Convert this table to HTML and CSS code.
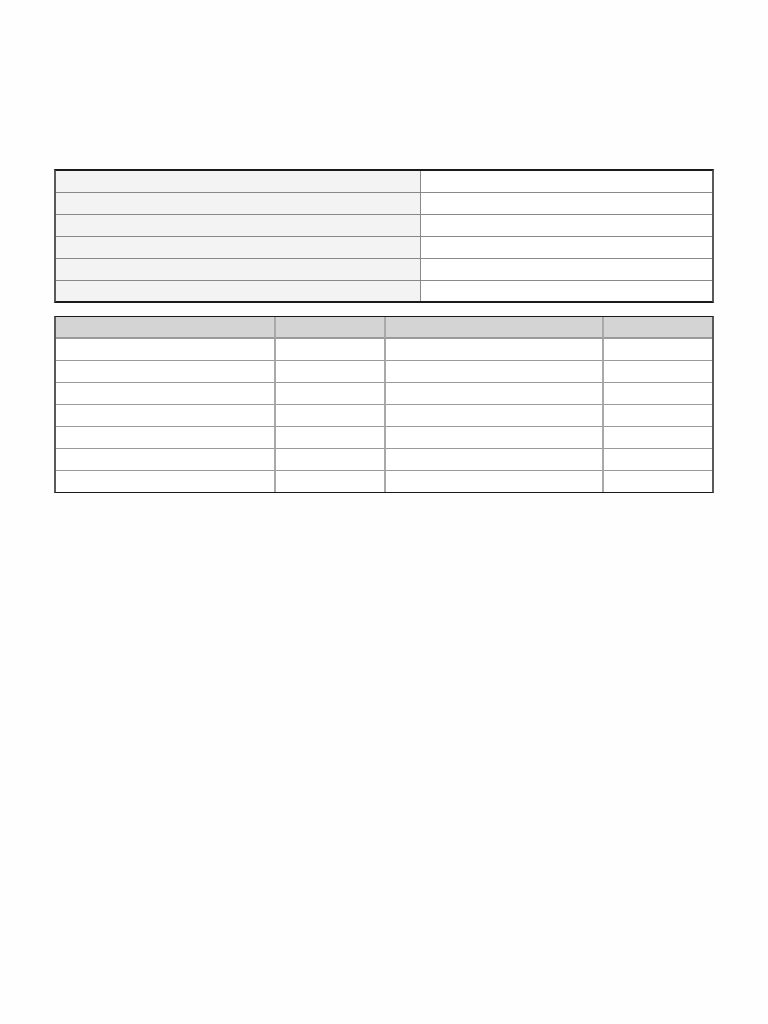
FILE: index.html
```html
<!DOCTYPE html>
<html lang="en">
<head>
<meta charset="utf-8">
<title>Tables</title>
<link rel="stylesheet" href="styles.css">
</head>
<body>
<main class="page">
  <table class="grid props">
    <colgroup><col class="c-key"><col class="c-val"></colgroup>
    <tbody>
      <tr><th></th><td></td></tr>
      <tr><th></th><td></td></tr>
      <tr><th></th><td></td></tr>
      <tr><th></th><td></td></tr>
      <tr><th></th><td></td></tr>
      <tr><th></th><td></td></tr>
    </tbody>
  </table>
  <table class="grid list">
    <colgroup><col class="c1"><col class="c2"><col class="c3"><col class="c4"></colgroup>
    <thead>
      <tr><th></th><th></th><th></th><th></th></tr>
    </thead>
    <tbody>
      <tr><td></td><td></td><td></td><td></td></tr>
      <tr><td></td><td></td><td></td><td></td></tr>
      <tr><td></td><td></td><td></td><td></td></tr>
      <tr><td></td><td></td><td></td><td></td></tr>
      <tr><td></td><td></td><td></td><td></td></tr>
      <tr><td></td><td></td><td></td><td></td></tr>
      <tr><td></td><td></td><td></td><td></td></tr>
    </tbody>
  </table>
</main>
</body>
</html>
```

FILE: styles.css
```css
html, body {
  margin: 0;
  padding: 0;
  background: #fefefe;
  font-family: "Liberation Sans", Arial, sans-serif;
  font-size: 13px;
}

.page {
  padding: 169px 54px 0;
  display: flex;
  flex-direction: column;
  gap: 13px;
}

.grid {
  width: 660px;
  table-layout: fixed;
  border-collapse: separate;
  border-spacing: 0;
  border-left: 2px solid #5a5a5a;
  border-right: 2px solid #5a5a5a;
}

.grid th,
.grid td {
  height: 22px;
  padding: 0;
  box-sizing: border-box;
  font-weight: normal;
}

/* first table: key/value sheet */
.props {
  border-top: 2px solid #1a1a1a;
  border-bottom: 2px solid #1a1a1a;
}
.props .c-key { width: 365px; }
.props .c-val { width: 291px; }

.props th {
  background: #f3f3f3;
  border-right: 1px solid #888;
  border-bottom: 1px solid #888;
}
.props td {
  background: #fff;
  border-bottom: 1px solid #888;
}
.props tr:last-child th,
.props tr:last-child td {
  border-bottom: none;
  height: 20px;
}

/* second table: list with header */
.list {
  border-top: 1px solid #1a1a1a;
  border-bottom: 1px solid #1a1a1a;
}
.list .c1 { width: 220px; }
.list .c2 { width: 110px; }
.list .c3 { width: 218px; }
.list .c4 { width: 108px; }

.list th {
  background: #d4d4d4;
  border-right: 2px solid #a9a9a9;
  border-bottom: 2px solid #9a9a9a;
}
.list td {
  background: #fff;
  border-right: 2px solid #a9a9a9;
  border-bottom: 1px solid #9a9a9a;
}
.list th:last-child,
.list td:last-child { border-right: none; }
.list tbody tr:last-child td {
  border-bottom: none;
  height: 21px;
}
```
